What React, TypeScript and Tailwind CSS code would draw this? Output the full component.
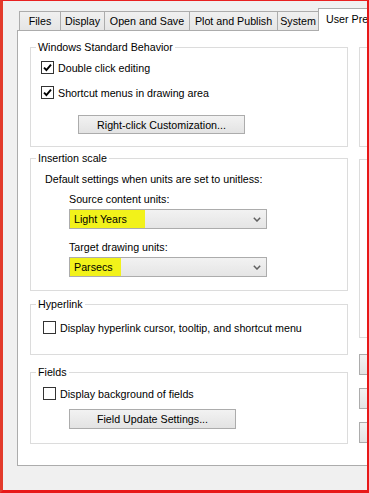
import type { ReactNode } from "react"

const tabs = [
  { label: "Files", w: "w-[42px]" },
  { label: "Display", w: "w-[45px]" },
  { label: "Open and Save", w: "w-[86px]" },
  { label: "Plot and Publish", w: "w-[89px]" },
  { label: "System", w: "w-[42px]" },
]

function Group({ label, className, children }: { label?: string; className: string; children?: ReactNode }) {
  return (
    <div className={`relative border border-[#dcdcdc] ${className}`}>
      {label && (
        <span className="absolute left-[5px] -top-[8px] bg-white px-[2px] leading-[14px]">{label}</span>
      )}
      {children}
    </div>
  )
}

function Checkbox({ checked, label }: { checked?: boolean; label: string }) {
  return (
    <div className="flex items-center h-[13px] gap-[4px]">
      <div className="w-[13px] h-[13px] border border-[#333333] bg-white flex items-center justify-center shrink-0">
        {checked && (
          <svg width="11" height="11" viewBox="0 0 11 11">
            <path d="M2 5.6 L4.4 8 L9 2.6" fill="none" stroke="#000" strokeWidth="1.9" />
          </svg>
        )}
      </div>
      <span className="leading-[14px] whitespace-nowrap">{label}</span>
    </div>
  )
}

function WinButton({ label, className }: { label: string; className: string }) {
  return (
    <div
      className={`border border-[#acacac] bg-gradient-to-b from-[#f2f2f2] to-[#e3e3e3] flex items-center justify-center leading-[14px] ${className}`}
    >
      {label}
    </div>
  )
}

function Select({ value, hl }: { value: string; hl: string }) {
  return (
    <div className="w-[198px] h-[20px] border border-[#acacac] bg-gradient-to-b from-[#f2f2f2] to-[#e5e5e5] flex items-center">
      <span className={`${hl} h-[18px] bg-[#f2f21a] flex items-center pl-[4px] leading-[14px]`}>{value}</span>
      <svg className="ml-auto mr-[5px]" width="8" height="5" viewBox="0 0 8 5">
        <path d="M0.8 0.8 L4 4 L7.2 0.8" fill="none" stroke="#606060" strokeWidth="1.5" />
      </svg>
    </div>
  )
}

export default function App() {
  return (
    <div className="w-[369px] h-[493px] overflow-hidden bg-[#f0f0f0] border-t border-t-[#e82020] border-l-[3px] border-l-[#e33b2c] border-r-2 border-r-[#e81818] border-b-[3px] border-b-[#e81818] font-['Liberation_Sans',Arial,sans-serif] text-[10.7px] text-black">
      <div className="relative z-10 flex items-end mt-[7px] ml-[16px] h-[23px]">
        {tabs.map((t, i) => (
          <div
            key={t.label}
            className={`${t.w} ${i > 0 ? "-ml-px" : ""} shrink-0 h-[19px] mb-px border border-b-0 border-[#acacac] bg-gradient-to-b from-[#f0f0f0] to-[#e5e5e5] flex items-center justify-center whitespace-nowrap`}
          >
            {t.label}
          </div>
        ))}
        <div className="-ml-px shrink-0 w-[90px] h-[23px] border border-b-0 border-[#acacac] bg-white pl-[7px] pt-[3px] leading-[14px] whitespace-nowrap">
          User Preferences
        </div>
      </div>

      <div className="-mt-px ml-[14px] w-[420px] h-[436px] border border-[#acacac] bg-white pl-[12px] flex gap-[11px]">
        <div className="w-[318px] shrink-0 flex flex-col">
          <Group label="Windows Standard Behavior" className="mt-[16px] h-[100px] pl-[10px] pt-[13px]">
            <div className="flex flex-col gap-[12px]">
              <Checkbox checked label="Double click editing" />
              <Checkbox checked label="Shortcut menus in drawing area" />
            </div>
            <WinButton label="Right-click Customization..." className="mt-[16px] ml-[37px] w-[167px] h-[19px]" />
          </Group>

          <Group label="Insertion scale" className="mt-[11px] h-[133px] pl-[14px] pt-[13px]">
            <div className="leading-[14px]">Default settings when units are set to unitless:</div>
            <div className="ml-[24px]">
              <div className="mt-[6px] leading-[14px]">Source content units:</div>
              <div className="mt-[3px]">
                <Select value="Light Years" hl="w-[75px]" />
              </div>
              <div className="mt-[11px] leading-[14px]">Target drawing units:</div>
              <div className="mt-[3px]">
                <Select value="Parsecs" hl="w-[51px]" />
              </div>
            </div>
          </Group>

          <Group label="Hyperlink" className="mt-[13px] h-[51px] pl-[12px] pt-[16px]">
            <Checkbox label="Display hyperlink cursor, tooltip, and shortcut menu" />
          </Group>

          <Group label="Fields" className="mt-[17px] h-[72px] pl-[12px] pt-[14px]">
            <Checkbox label="Display background of fields" />
            <WinButton label="Field Update Settings..." className="mt-[9px] ml-[26px] w-[167px] h-[20px]" />
          </Group>
        </div>

        <div className="w-[60px] shrink-0 flex flex-col">
          <Group className="mt-[16px] h-[100px]" />
          <Group className="mt-[12px] h-[179px]" />
          <WinButton label="" className="mt-[16px] h-[21px]" />
          <WinButton label="" className="mt-[13px] h-[21px]" />
          <WinButton label="" className="mt-[13px] h-[21px]" />
        </div>
      </div>
    </div>
  )
}
